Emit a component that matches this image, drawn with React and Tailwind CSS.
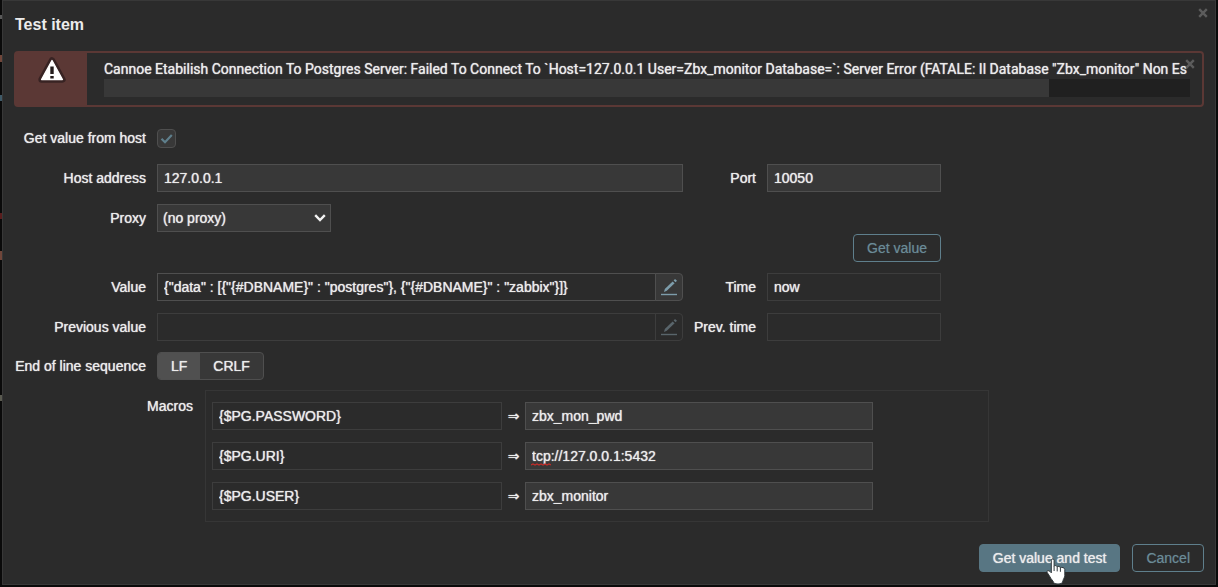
import React from "react";

const inputBase =
  "block h-7 w-full min-w-0 border px-1.5 text-sm text-[#ececec] outline-none [text-shadow:inherit]";
const inputFilled = "border-[#4f4f4f] bg-[#383838]";
const inputReadonly = "border-[#3d3d3d] bg-transparent";

const rowGrid =
  "grid grid-cols-[131px_minmax(0,526px)_62px_174px] items-center gap-x-[11px]";
const labelClass = "whitespace-nowrap text-right";

const macros = [
  { id: "password", name: "{$PG.PASSWORD}", value: "zbx_mon_pwd" },
  { id: "uri", name: "{$PG.URI}", value: "tcp://127.0.0.1:5432", misspelt: true },
  { id: "user", name: "{$PG.USER}", value: "zbx_monitor" },
];

function CloseIcon() {
  return (
    <svg viewBox="0 0 10 10" className="size-2.5" fill="none" stroke="#5c5c5c" strokeWidth="2.4">
      <path d="M1.2 1.2 8.8 8.8M8.8 1.2 1.2 8.8" />
    </svg>
  );
}

function WarningIcon() {
  return (
    <svg viewBox="0 0 32 30" className="h-[30px] w-8">
      <path d="M16 4.5 26.4 23.5H5.6Z" fill="#382323" stroke="#382323" strokeWidth="6.5" strokeLinejoin="round" />
      <path d="M16 4.5 26.4 23.5H5.6Z" fill="#fff" stroke="#fff" strokeWidth="1.4" strokeLinejoin="round" />
      <path d="M14.3 10.5h3.4v7.4h-3.4zM14.3 20h3.4v2.6h-3.4z" fill="#241c1c" />
    </svg>
  );
}

function PencilIcon({ dim }) {
  const color = dim ? "#59656b" : "#7d9dab";
  return (
    <svg viewBox="0 0 18 18" className="size-[18px]">
      <path d="M1 16.5h16" stroke={color} strokeWidth="1.4" />
      <path d="M4 14 4.8 11 12.6 3.4 14.6 5.2 6.8 12.8Z" fill={color} />
      <path d="M13.6 2.4 15 1 17 2.8 15.6 4.2Z" fill={color} />
    </svg>
  );
}

function HandCursor() {
  return (
    <svg
      viewBox="0 0 20 27"
      className="pointer-events-none absolute top-3.5 left-[67px] z-10 h-[27px] w-5"
      aria-hidden="true"
    >
      <path
        d="M5.3 2.2C5.3.6 8.1.6 8.1 2.2V8.4C8.6 7.1 11 7.3 11.2 8.9 11.9 7.9 14.2 8.2 14.4 9.8 15.5 9 18.8 9.4 18.8 11.6V17.4C18.8 19.6 17.2 21 17 22.6 16.6 25.2 15 26 12 26 8.8 26 7.6 25 7 23.2 5.6 21.6 4.1 19.3 3 17.2 2.2 15.6.5 14.4 1 13.2 1.8 11.8 4.1 13.1 5.3 14.8Z"
        fill="#fff"
        stroke="#30383c"
        strokeWidth="1"
      />
      <path d="M8.1 8.4V13M11.2 9V13.4M14.4 9.8V13.8" stroke="#30383c" strokeWidth="1" fill="none" />
    </svg>
  );
}

function ValueField({ id, value, dim }) {
  return (
    <div className="flex">
      <input
        id={id}
        readOnly
        defaultValue={value}
        className={`${inputBase} flex-1 bg-transparent ${dim ? "border-[#3d3d3d]" : "border-[#4f4f4f]"}`}
      />
      <button
        type="button"
        disabled={dim}
        aria-label="Edit"
        className={`-ml-px flex h-7 w-7 shrink-0 items-center justify-center rounded-r-sm border ${
          dim ? "border-[#3d3d3d]" : "border-[#4f4f4f] bg-[#383838]"
        }`}
      >
        <PencilIcon dim={dim} />
      </button>
    </div>
  );
}

function BackgroundEdge() {
  return (
    <svg className="h-full w-0.5 shrink-0" aria-hidden="true">
      <rect y="15" width="2" height="4" fill="#5a5a5a" />
      <rect y="55" width="2" height="7" fill="#70463a" />
      <rect y="95" width="2" height="6" fill="#3f5a68" />
      <rect y="213" width="2" height="6" fill="#5a1d1d" />
      <rect y="251" width="2" height="9" fill="#70463a" />
      <rect y="395" width="2" height="6" fill="#5a5a50" />
    </svg>
  );
}

export default function App() {
  return (
    <div className="flex h-screen overflow-hidden bg-[#0a0a0a] pr-0.5 pb-0.5 font-['Liberation_Sans',Arial,sans-serif] text-sm text-[#ececec] [text-shadow:0_0_1px_#ececec]">
      <BackgroundEdge />
      <div role="dialog" aria-labelledby="title" className="min-w-0 flex-1 border border-[#383838] bg-[#2b2b2b] pr-[11px] pl-3">
        <header className="flex items-start justify-between">
          <h1 id="title" className="mt-3 text-base leading-6 font-bold [text-shadow:none]">
            Test item
          </h1>
          <button type="button" aria-label="Close" className="-mr-1 pt-[7px]">
            <CloseIcon />
          </button>
        </header>

        <section role="alert" className="relative mt-3.5 -ml-px flex rounded-sm border-2 border-[#5b3835]">
          <div className="flex w-[71px] shrink-0 justify-center bg-[#5b3835] pt-[3px]">
            <WarningIcon />
          </div>
          <div className="min-w-0 flex-1 pt-1.5 pr-3 pb-2 pl-[17px]">
            <p className="overflow-hidden font-[Roboto,'Liberation_Sans',sans-serif] leading-5 whitespace-nowrap">
              Cannoe Etabilish Connection To Postgres Server: Failed To Connect To `Host=127.0.0.1
              User=Zbx_monitor Database=`: Server Error (FATALE: Il Database "Zbx_monitor" Non Es
            </p>
            <div className="h-[18px] bg-[#202020]">
              <div className="h-full w-[87%] bg-[#383838]" />
            </div>
          </div>
          <button type="button" aria-label="Dismiss message" className="absolute top-1.5 right-[7px]">
            <CloseIcon />
          </button>
        </section>

        <form onSubmit={(e) => e.preventDefault()}>
          <div className={`${rowGrid} mt-[17px] h-7`}>
            <label htmlFor="from-host" className={labelClass}>
              Get value from host
            </label>
            <span className="relative flex size-[19px]">
              <input
                id="from-host"
                type="checkbox"
                defaultChecked
                className="size-[19px] appearance-none rounded-sm border border-[#4f4f4f] bg-[#383838]"
              />
              <svg viewBox="0 0 19 19" className="pointer-events-none absolute inset-0 size-[19px]" fill="none">
                <path d="M4.5 9.7 8 13.2 14.8 6" stroke="#5f7f8c" strokeWidth="2.2" />
              </svg>
            </span>
          </div>

          <div className={`${rowGrid} mt-3`}>
            <label htmlFor="host" className={labelClass}>
              Host address
            </label>
            <input id="host" defaultValue="127.0.0.1" className={`${inputBase} ${inputFilled}`} />
            <label htmlFor="port" className={labelClass}>
              Port
            </label>
            <input id="port" defaultValue="10050" className={`${inputBase} ${inputFilled}`} />
          </div>

          <div className={`${rowGrid} mt-3`}>
            <label htmlFor="proxy" className={labelClass}>
              Proxy
            </label>
            <div className="relative w-[174px]">
              <select
                id="proxy"
                className="block h-7 w-full appearance-none border border-[#4f4f4f] bg-[#383838] px-[5px] text-sm text-[#ececec] [text-shadow:inherit]"
              >
                <option>(no proxy)</option>
              </select>
              <svg
                viewBox="0 0 12 8"
                className="pointer-events-none absolute top-2.5 right-[5px] h-2 w-3"
                fill="none"
              >
                <path d="M1.2 1.2 6 6 10.8 1.2" stroke="#f2f2f2" strokeWidth="2.4" />
              </svg>
            </div>
          </div>

          <div className={`${rowGrid} mt-0.5`}>
            <button
              type="button"
              className="col-start-4 h-7 justify-self-end rounded-sm border border-[#5f7f8c] px-[13px] text-[#6b8b97] [text-shadow:0_0_1px_#4b626b]"
            >
              Get value
            </button>
          </div>

          <div className={`${rowGrid} mt-[11px]`}>
            <label htmlFor="value" className={labelClass}>
              Value
            </label>
            <ValueField id="value" value={'{"data" : [{"{#DBNAME}" : "postgres"}, {"{#DBNAME}" : "zabbix"}]}'} />
            <label htmlFor="time" className={labelClass}>
              Time
            </label>
            <input id="time" readOnly defaultValue="now" className={`${inputBase} ${inputReadonly}`} />
          </div>

          <div className={`${rowGrid} mt-3`}>
            <label htmlFor="prev-value" className={labelClass}>
              Previous value
            </label>
            <ValueField id="prev-value" value="" dim />
            <label htmlFor="prev-time" className={labelClass}>
              Prev. time
            </label>
            <input id="prev-time" readOnly className={`${inputBase} ${inputReadonly}`} />
          </div>

          <div className={`${rowGrid} mt-[11px]`} role="radiogroup" aria-labelledby="eol">
            <span id="eol" className={labelClass}>
              End of line sequence
            </span>
            <div className="flex h-7 w-fit overflow-hidden rounded-sm border border-[#4f4f4f] bg-[#383838] leading-[26px]">
              <label className="has-checked:bg-[#505050] px-[13px]">
                <input type="radio" name="eol" defaultChecked className="sr-only" />
                LF
              </label>
              <label className="has-checked:bg-[#505050] px-[13px]">
                <input type="radio" name="eol" className="sr-only" />
                CRLF
              </label>
            </div>
          </div>

          <div className="mt-2.5 grid grid-cols-[178px_minmax(0,784px)] gap-x-3">
            <span className="pt-1.5 text-right leading-5">Macros</span>
            <div className="flex flex-col gap-3 border border-[#363636] py-[11px] pl-1.5">
              {macros.map((m) => (
                <div key={m.id} className="grid grid-cols-[290px_23px_348px] items-center">
                  <input
                    readOnly
                    aria-label="Macro"
                    defaultValue={m.name}
                    className={`${inputBase} ${inputReadonly}`}
                  />
                  <span className="text-center font-['DejaVu_Sans',sans-serif]">⇒</span>
                  <div className="relative">
                    <input
                      aria-label={m.name}
                      spellCheck={false}
                      defaultValue={m.value}
                      className={`${inputBase} ${inputFilled}`}
                    />
                    {m.misspelt && (
                      <svg
                        viewBox="0 0 20 3"
                        className="pointer-events-none absolute bottom-1 left-1.5 h-[3px] w-5"
                        fill="none"
                      >
                        <path
                          d="M0 2 2 1 4 2 6 1 8 2 10 1 12 2 14 1 16 2 18 1 20 2"
                          stroke="#c02d2a"
                          strokeWidth="1.3"
                        />
                      </svg>
                    )}
                  </div>
                </div>
              ))}
            </div>
          </div>

          <footer className="mt-[22px] flex justify-end gap-3">
            <div className="relative">
              <button
                type="submit"
                className="h-7 rounded-sm border border-[#587683] bg-[#587683] px-[13px] text-[#ececec] [text-shadow:inherit]"
              >
                Get value and test
              </button>
              <HandCursor />
            </div>
            <button
              type="button"
              className="h-7 rounded-sm border border-[#5f7f8c] px-[13px] text-[#6b8b97] [text-shadow:0_0_1px_#4b626b]"
            >
              Cancel
            </button>
          </footer>
        </form>
      </div>
    </div>
  );
}
